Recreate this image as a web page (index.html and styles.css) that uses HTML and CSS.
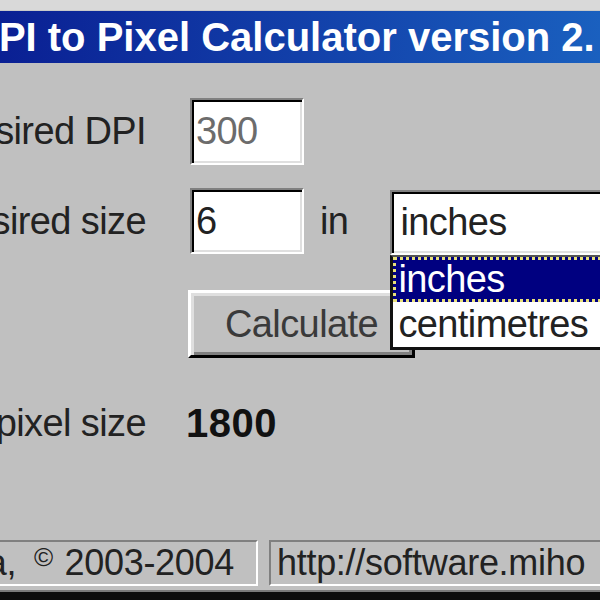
FILE: index.html
```html
<!DOCTYPE html>
<html>
<head>
<meta charset="utf-8">
<title>DPI to Pixel Calculator</title>
<link rel="stylesheet" href="styles.css">
</head>
<body>
<div class="window">
  <div class="frame-top"></div>
  <div class="titlebar"><span class="title">DPI to Pixel Calculator version 2.</span></div>
  <div class="content">
    <div class="row r1">
      <span class="lbl">Desired DPI</span>
      <div class="edit dim">300</div>
    </div>
    <div class="row r2">
      <span class="lbl">Desired size</span>
      <div class="edit">6</div>
      <span class="unit">in</span>
      <div class="combo">
        <span>inches</span>
        <ul class="list">
          <li class="sel">inches</li>
          <li>centimetres</li>
        </ul>
      </div>
    </div>
    <div class="row r3">
      <span class="lbl"></span>
      <button class="btn" type="button">Calculate</button>
    </div>
    <div class="row r4">
      <span class="lbl">pixel size</span>
      <b class="result">1800</b>
    </div>
  </div>
  <div class="status">
    <div class="panel p1"><span>a, <span class="copy">©</span> 2003-2004</span></div>
    <div class="panel p2"><span>http://software.miho</span></div>
  </div>
  <div class="frame-bottom"></div>
</div>
</body>
</html>
```
FILE: styles.css
```css
html, body {
  margin: 0;
  width: 600px;
  height: 600px;
  overflow: hidden;
  background: #c0c0c0;
}

.window {
  width: 900px;
  height: 600px;
  margin-left: -200px;
  display: flex;
  flex-direction: column;
  background: #c0c0c0;
  color: #222;
  font-family: "Liberation Sans", Arial, sans-serif;
}

.frame-top {
  height: 10px;
  background: #d9d9d9;
  border-bottom: 1px solid #c9c9c9;
  flex: none;
}

.titlebar {
  height: 52px;
  flex: none;
  display: flex;
  align-items: center;
  padding-left: 170px;
  background: linear-gradient(90deg, #000080 0%, #0a1f93 22%, #1a60bf 89%, #1c6ac8 100%);
}

.title {
  color: #fff;
  font-weight: bold;
  font-size: 40px;
  white-space: nowrap;
}

.content {
  flex: 1;
  padding-top: 35px;
  font-size: 38px;
  letter-spacing: -0.6px;
}

.row {
  display: flex;
  align-items: center;
}

.lbl {
  width: 346px;
  flex: none;
  text-align: right;
  white-space: nowrap;
}

.r1 { height: 67px; }
.r2 { height: 66px; margin-top: 23px; }
.r3 { height: 68px; margin-top: 36px; }
.r4 { height: 56px; margin-top: 37px; }

.edit {
  margin-left: 44px;
  width: 114px;
  height: 100%;
  box-sizing: border-box;
  background: #fff;
  border: 2px solid;
  border-color: #808080 #fff #fff #808080;
  box-shadow: inset 2px 2px #000, inset -2px -2px #dfdfdf;
  display: flex;
  align-items: center;
  padding-left: 4px;
  color: #222;
}

.edit.dim { color: #6c6c6c; }

.unit {
  margin-left: 16px;
}

.combo {
  position: relative;
  z-index: 2;
  margin-left: 42px;
  align-self: flex-start;
  margin-top: 2px;
  width: 300px;
  height: 65px;
  box-sizing: border-box;
  background: #fff;
  border: 2px solid;
  border-color: #808080 #fff #fff #808080;
  box-shadow: inset 2px 2px #000, inset -2px -2px #dfdfdf;
  display: flex;
  align-items: center;
  padding-left: 8px;
}

.list {
  position: absolute;
  left: -2px;
  top: calc(100% + 2px);
  width: 300px;
  margin: 0;
  padding: 0;
  list-style: none;
  background: #fff;
  border-top: 2px solid #555;
  border-left: 3px solid #111;
  border-bottom: 3px solid #111;
  border-right: 3px solid #111;
}

.list li {
  height: 45px;
  display: flex;
  align-items: center;
  padding-left: 5px;
  color: #222;
}

.list li.sel {
  background: #000080;
  color: #fff;
  outline: 3px dotted #e8e07a;
  outline-offset: -3px;
}

.btn {
  margin-left: 42px;
  width: 227px;
  height: 68px;
  box-sizing: border-box;
  background: #c0c0c0;
  border: 3px solid;
  border-color: #fff #000 #000 #fff;
  box-shadow: inset 3px 3px #dfdfdf, inset -3px -3px #808080;
  font-family: "Liberation Sans", Arial, sans-serif;
  font-size: 38px;
  letter-spacing: -0.6px;
  color: #3a3a3a;
  padding: 0;
}

.result {
  margin-left: 40px;
  font-weight: bold;
  font-size: 40px;
  letter-spacing: 0.5px;
  color: #111;
}

.status {
  flex: none;
  display: flex;
  gap: 11px;
  padding: 4px 0;
  font-size: 36px;
  letter-spacing: -0.3px;
}

.panel {
  height: 46px;
  box-sizing: border-box;
  border: 2px solid;
  border-color: #808080 #fff #fff #808080;
  display: flex;
  align-items: center;
  white-space: nowrap;
  color: #222;
}

.p1 {
  width: 458px;
  justify-content: flex-end;
  padding-right: 22px;
}

.p2 {
  flex: 1;
  padding-left: 6px;
}

.copy {
  font-size: 26px;
  vertical-align: 9px;
  margin: 0 2px 0 8px;
}

.frame-bottom {
  flex: none;
  height: 8px;
  border-top: 2px solid #7a7a7a;
  background: #0c0c0c;
}
```
